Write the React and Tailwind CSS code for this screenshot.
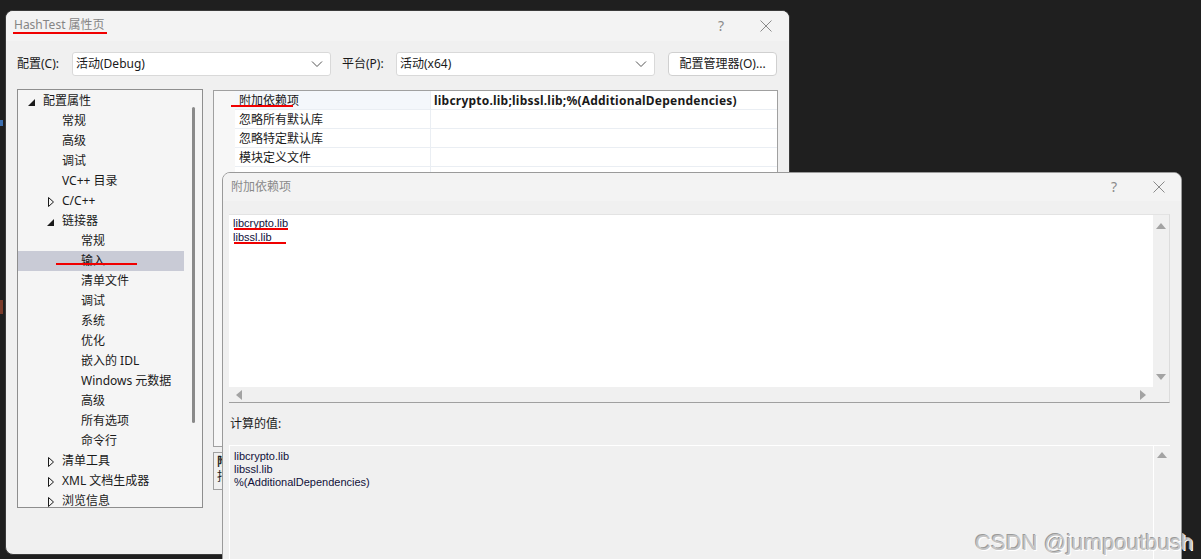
import React from "react";

const ui = { fontFamily: '"Noto Sans", "Noto Sans CJK SC", sans-serif' };
const cls = { fontFamily: '"Liberation Sans", "Noto Sans CJK SC", sans-serif' };

const tree = [
  { t: "配置属性", lv: 0, open: true },
  { t: "常规", lv: 1 },
  { t: "高级", lv: 1 },
  { t: "调试", lv: 1 },
  { t: "VC++ 目录", lv: 1 },
  { t: "C/C++", lv: 1, closed: true },
  { t: "链接器", lv: 1, open: true },
  { t: "常规", lv: 2 },
  { t: "输入", lv: 2, sel: true },
  { t: "清单文件", lv: 2 },
  { t: "调试", lv: 2 },
  { t: "系统", lv: 2 },
  { t: "优化", lv: 2 },
  { t: "嵌入的 IDL", lv: 2 },
  { t: "Windows 元数据", lv: 2 },
  { t: "高级", lv: 2 },
  { t: "所有选项", lv: 2 },
  { t: "命令行", lv: 2 },
  { t: "清单工具", lv: 1, closed: true },
  { t: "XML 文档生成器", lv: 1, closed: true },
  { t: "浏览信息", lv: 1, closed: true },
];

// only the rows that show above the second dialog
const props = ["附加依赖项", "忽略所有默认库", "忽略特定默认库", "模块定义文件", ""];

function Chevron() {
  return (
    <svg width="12" height="8" viewBox="0 0 12 8" className="text-[#555]">
      <path d="M1 1.5 L6 6.5 L11 1.5" fill="none" stroke="currentColor" strokeWidth="1" />
    </svg>
  );
}

function TitleButtons() {
  return (
    <div className="flex items-center gap-[36px] text-[#8a8a8a]">
      <span className="text-[14px] leading-none" style={ui}>?</span>
      <svg width="12" height="12" viewBox="0 0 12 12">
        <path d="M0.5 0.5 L11.5 11.5 M11.5 0.5 L0.5 11.5" stroke="currentColor" strokeWidth="1" />
      </svg>
    </div>
  );
}

function Arrow({ dir }) {
  const d = {
    up: "M0 6 L5 0 L10 6 Z",
    down: "M0 0 L10 0 L5 6 Z",
    left: "M6 0 L6 10 L0 5 Z",
    right: "M0 0 L6 5 L0 10 Z",
  }[dir];
  const vert = dir === "up" || dir === "down";
  return (
    <svg width={vert ? 10 : 6} height={vert ? 6 : 10} viewBox={vert ? "0 0 10 6" : "0 0 6 10"}>
      <path d={d} fill="#a3a3a3" />
    </svg>
  );
}

function Combo({ text }) {
  return (
    <div className="w-[259px] h-[24px] bg-white border border-[#d9d9d9] rounded-[3px] flex items-center justify-between pl-[3px] pr-[7px] text-[12px] text-[#1a1a1a]">
      <span>{text}</span>
      <Chevron />
    </div>
  );
}

function Mark({ className }) {
  return <div className={"absolute h-[2px] bg-[#f00000] " + className} />;
}

export default function App() {
  return (
    <div className="relative w-[1201px] h-[559px] bg-[#1f1f1f] overflow-hidden" style={ui}>
      {/* editor edge behind */}
      <div className="absolute left-0 top-[120px] w-[3px] h-[6px] bg-[#3c6fb0]" />
      <div className="absolute left-0 top-[300px] w-[3px] h-[14px] bg-[#7a3b2a]" />

      {/* main property dialog */}
      <div className="absolute left-[5px] top-[10px] w-[785px] h-[545px] rounded-[8px] bg-[#f0f0f0] flex flex-col overflow-hidden border border-[#3a3a3a]">
        <div className="h-[30px] bg-[#f3f3f3] flex items-center justify-between pl-[8px] pr-[17px] shrink-0">
          <span className="text-[12px] text-[#858585] mt-[-2px]">HashTest 属性页</span>
          <TitleButtons />
        </div>

        <div className="flex items-center mt-[11px] pl-[11px] text-[12px] text-[#1a1a1a]">
          <span className="w-[55px]">配置(C):</span>
          <Combo text="活动(Debug)" />
          <span className="ml-[11px] w-[54px]">平台(P):</span>
          <Combo text="活动(x64)" />
          <div className="ml-[13px] w-[109px] h-[24px] mt-[-1px] bg-white border border-[#d0d0d0] rounded-[4px] flex items-center justify-center">
            配置管理器(O)...
          </div>
        </div>

        <div className="flex mt-[13px] pl-[11px] gap-[10px] flex-1 min-h-0">
          {/* tree */}
          <div className="w-[186px] h-[419px] border border-[#8e8e8e] bg-[#f5f5f5] flex overflow-hidden">
            <div className="w-[166px] pt-[1px]">
              {tree.map((n, i) => (
                <div
                  key={i}
                  className={"h-[20px] flex items-center text-[12px] text-[#1a1a1a] relative " + (n.sel ? "bg-[#c9cbd6]" : "")}
                  style={{ paddingLeft: 25 + n.lv * 19 }}
                >
                  {n.open && (
                    <svg width="7" height="7" viewBox="0 0 7 7" className="absolute" style={{ left: 10 + n.lv * 19, top: 8 }}>
                      <path d="M7 0 L7 7 L0 7 Z" fill="#1a1a1a" />
                    </svg>
                  )}
                  {n.closed && (
                    <svg width="6" height="10" viewBox="0 0 6 10" className="absolute" style={{ left: 11 + n.lv * 19, top: 6 }}>
                      <path d="M0.5 0.5 L5.5 5 L0.5 9.5 Z" fill="none" stroke="#1a1a1a" strokeWidth="1" />
                    </svg>
                  )}
                  <span>{n.t}</span>
                </div>
              ))}
            </div>
            <div className="flex-1 flex justify-center pt-[17px]">
              <div className="w-[3px] h-[316px] bg-[#8a8a8a] rounded-full" />
            </div>
          </div>

          {/* property grid + description */}
          <div className="w-[565px] flex flex-col mt-[1px]">
            <div className="h-[357px] border border-[#a0a0a0] bg-[#f7f7f7] flex">
              <div className="w-[21px]" />
              <div className="flex-1 bg-white">
                {props.map((p, i) => (
                  <div key={i} className="h-[19px] flex border-b border-[#eaeef3] text-[12px] text-[#1a1a1a]">
                    <div className={"w-[196px] pl-[4px] pt-[2px] flex items-center border-r border-[#eaeef3] " + (i === 0 ? "bg-[#f4f7fb]" : "")}>{p}</div>
                    <div className="flex-1 pl-[3px] pt-[2px] flex items-center font-bold tracking-[0.22px]">
                      {i === 0 ? "libcrypto.lib;libssl.lib;%(AdditionalDependencies)" : ""}
                    </div>
                  </div>
                ))}
              </div>
            </div>
            <div className="mt-[5px] h-[38px] border border-[#a0a0a0] bg-[#f0f0f0] pl-[3px] pt-[1px] text-[12px] leading-[15px] text-[#1a1a1a]">
              <div className="font-bold">附</div>
              <div>指</div>
            </div>
          </div>
        </div>
      </div>

      <Mark className="left-[13px] top-[32px] w-[94px]" />
      <Mark className="left-[231px] top-[105px] w-[62px]" />
      <Mark className="left-[56px] top-[263px] w-[81px]" />

      {/* additional dependencies dialog */}
      <div className="absolute left-[222px] top-[172px] w-[960px] h-[400px] rounded-t-[8px] bg-[#f0f0f0] border border-[#9a9a9a] flex flex-col overflow-hidden">
        <div className="h-[28px] bg-[#f3f3f3] flex items-center justify-between pl-[8px] pr-[16px] shrink-0">
          <span className="text-[12px] text-[#8a8a8a]">附加依赖项</span>
          <TitleButtons />
        </div>

        <div className="mt-[13px] ml-[6px] w-[941px] h-[189px] border-t border-[#e3e3e3] border-r border-r-[#dcdcdc] border-b border-b-[#a0a0a0] flex flex-col">
          <div className="flex flex-1 min-h-0">
            <div className="flex-1 bg-white pl-[4px] pt-[1px] text-[11px] leading-[14px] text-[#10103a]" style={cls}>
              <div>libcrypto.lib</div>
              <div>libssl.lib</div>
            </div>
            <div className="w-[16px] bg-[#f0f0f0] flex flex-col items-center justify-between pt-[8px] pb-[7px]">
              <Arrow dir="up" />
              <Arrow dir="down" />
            </div>
          </div>
          <div className="h-[15px] bg-[#f0f0f0] flex items-center justify-between pl-[7px] pr-[23px]">
            <Arrow dir="left" />
            <Arrow dir="right" />
          </div>
        </div>

        <div className="mt-[12px] ml-[7px] text-[12px] text-[#1a1a1a]">计算的值:</div>

        <div className="mt-[12px] ml-[6px] w-[941px] flex-1 border-t border-l border-white flex">
          <div className="flex-1 pl-[4px] pt-[4px] text-[11px] leading-[13px] text-[#10103a]" style={cls}>
            <div>libcrypto.lib</div>
            <div>libssl.lib</div>
            <div>%(AdditionalDependencies)</div>
          </div>
          <div className="w-[17px] border-l border-white flex justify-center pt-[6px]">
            <Arrow dir="up" />
          </div>
        </div>
      </div>

      <Mark className="left-[234px] top-[228px] w-[54px]" />
      <Mark className="left-[234px] top-[242px] w-[52px]" />

      <div
        className="absolute left-[975px] top-[526px] text-[22px] text-[#c4c4c4] tracking-[0.1px]"
        style={{ ...cls, textShadow: "1px 1px 0 #ffffff, -1px -1px 0 #9a9a9a" }}
      >
        CSDN @jumpoutbush
      </div>
    </div>
  );
}
